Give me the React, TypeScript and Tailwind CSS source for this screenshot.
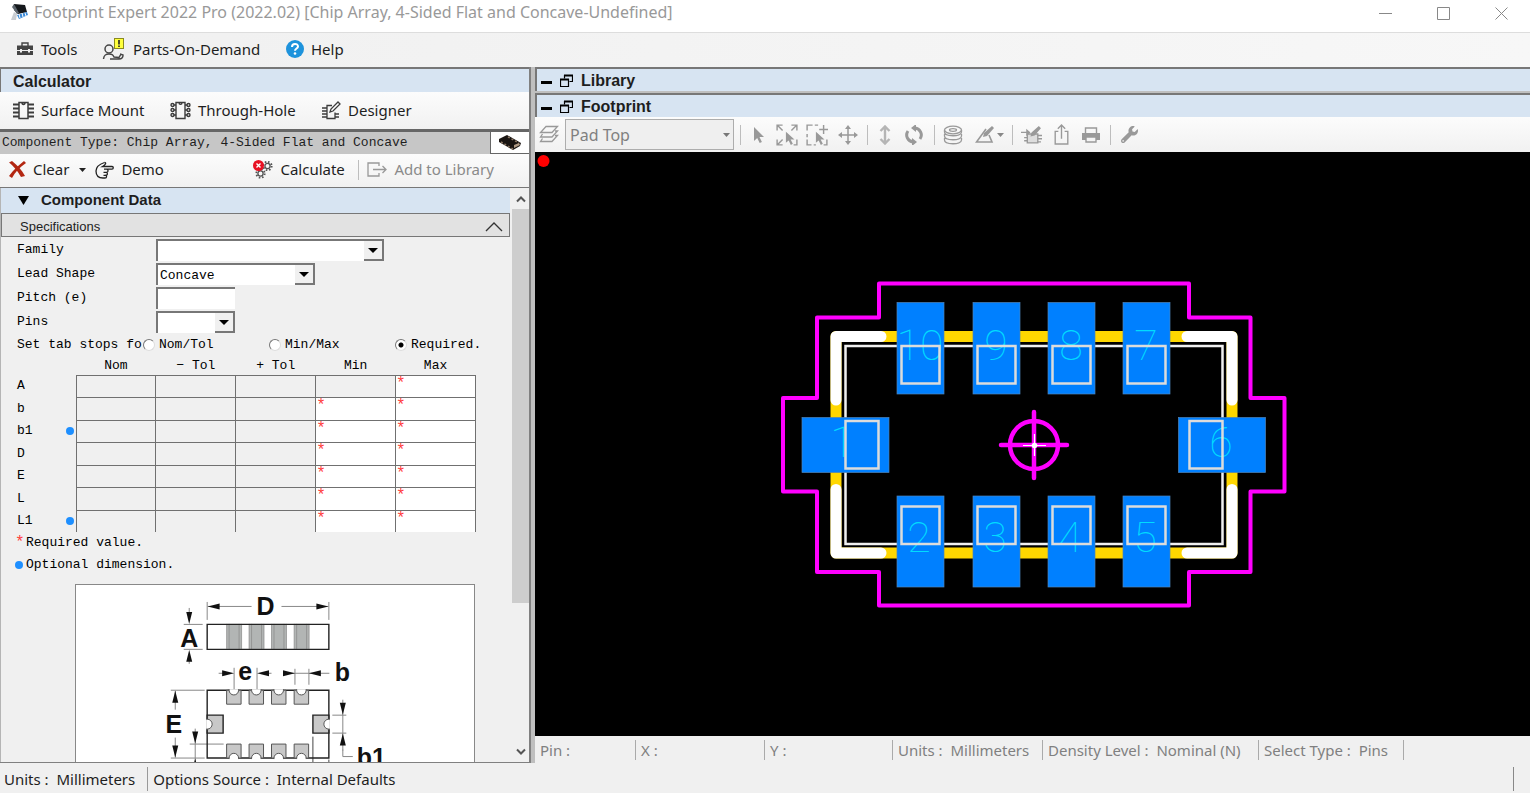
import { Fragment, useState } from 'react';
import type { ReactNode } from 'react';
import { FaWrench } from 'react-icons/fa';
import { clsx } from 'clsx';

const MONO = "font-['Liberation_Mono',monospace] text-[13px]";

/* ---------- small building blocks ---------- */

function Icon({ size = 20, className, children }: { size?: number; className?: string; children: ReactNode }) {
  return (
    <svg
      width={size}
      height={size}
      viewBox="0 0 20 20"
      fill="none"
      stroke="currentColor"
      strokeWidth="1.3"
      className={clsx('shrink-0', className)}
      aria-hidden="true"
    >
      {children}
    </svg>
  );
}

function ToolButton({ icon, label, className }: { icon: ReactNode; label: string; className?: string }) {
  return (
    <button type="button" className={clsx('flex items-center gap-[7px] whitespace-nowrap', className)}>
      {icon}
      {label}
    </button>
  );
}

function IconButton({ label, className, children }: { label: string; className?: string; children: ReactNode }) {
  return (
    <button type="button" aria-label={label} className={clsx('flex h-6 shrink-0 items-center justify-center', className)}>
      {children}
    </button>
  );
}

function Separator() {
  return <div className="h-5 w-px shrink-0 bg-[#bdbdbd]" />;
}

function ComboBox({ id, options, className }: { id: string; options: string[]; className?: string }) {
  return (
    <div className={clsx('relative h-[22px] border-t-2 border-l-2 border-[#777] bg-white', className)}>
      <select id={id} className="block h-full w-full appearance-none bg-transparent pl-[2px] outline-none">
        {options.map((option) => (
          <option key={option}>{option}</option>
        ))}
      </select>
      <span className="pointer-events-none absolute top-0 right-0 flex h-5 w-5 items-center justify-center border-r-2 border-b-2 border-[#777] bg-[#f0f0f0]">
        <svg width="10" height="5" viewBox="0 0 10 5">
          <path d="M0 0h10L5 5z" fill="#000" />
        </svg>
      </span>
    </div>
  );
}

/* ---------- icons ---------- */

function AppIcon() {
  return (
    <svg width="20" height="20" viewBox="0 0 20 20" aria-hidden="true">
      <path d="M1 18 4 10l3 2-1 6z" fill="#c9cdd2" />
      <path d="M4 2 15 3l2 7-9 2-4-4z" fill="#15181c" />
      <path d="M4 2 2 5l5 7 2-1z" fill="#5d656d" />
      <path d="m7 13 10-3 1 3-9 4z" fill="#3b8ad8" />
      <path d="m9 12 1 4M12 11l1 4M15 11l1 3" stroke="#fff" strokeWidth="1" />
    </svg>
  );
}

function ToolboxIcon() {
  return (
    <svg width="18" height="16" viewBox="0 0 18 16" aria-hidden="true" className="shrink-0">
      <path d="M6 5V2h6v3" fill="none" stroke="#444" strokeWidth="1.4" />
      <path d="M1 4.500h16V9H1z" fill="#444" />
      <path d="M1 10h3v1.500h2V10h6v1.500h2V10h3v4H1z" fill="#444" />
      <path d="M4 8h2v2.500H4zM12 8h2v2.500h-2z" fill="#eee" />
    </svg>
  );
}

function PartsIcon() {
  return (
    <svg width="24" height="24" viewBox="0 0 24 24" fill="none" stroke="#444" strokeWidth="1.500" aria-hidden="true" className="shrink-0">
      <circle cx="7" cy="12" r="4" />
      <path d="M1.500 22c.5-4 2-5 5.500-5s4 1 5 3l5 .5 2-3.500M8 22h9c3 0 4-2 4-4l-3-1" />
      <rect x="12.500" y="1.500" width="9" height="10" fill="#ffff3c" stroke="#8a8a20" strokeWidth="1" />
      <path d="M17 3v4.500M17 8.500V10" stroke="#222" strokeWidth="1.600" />
    </svg>
  );
}

function HelpIcon() {
  return (
    <svg width="18" height="18" viewBox="0 0 18 18" aria-hidden="true" className="shrink-0">
      <circle cx="9" cy="9" r="9" fill="#1e93dc" />
      <path d="M6 7c0-4 6-4 6-.5 0 2-3 2-3 4.200" fill="none" stroke="#fff" strokeWidth="2" />
      <circle cx="9" cy="13.500" r="1.300" fill="#fff" />
    </svg>
  );
}

function SurfaceMountIcon() {
  return (
    <svg width="21" height="19" viewBox="0 0 21 19" fill="none" stroke="#3c3c3c" strokeWidth="1.500" aria-hidden="true" className="shrink-0">
      <path d="M6 1.500h9v16H6zM9 1.500c0 2.500 3 2.500 3 0" />
      <path d="M0 3.500h6M0 7.500h6M0 11.500h6M0 15.500h6M15 3.500h6M15 7.500h6M15 11.500h6M15 15.500h6" strokeWidth="1.800" />
    </svg>
  );
}

function ThroughHoleIcon() {
  return (
    <svg width="21" height="19" viewBox="0 0 21 19" fill="none" stroke="#3c3c3c" strokeWidth="1.400" aria-hidden="true" className="shrink-0">
      <path d="M6 1.500h9v16H6zM9 1.500c0 2.500 3 2.500 3 0" />
      {[4, 9, 14].map((y) => (
        <Fragment key={y}>
          <circle cx="2.500" cy={y} r="1.500" />
          <circle cx="18.500" cy={y} r="1.500" />
          <path d={`M4 ${y}h2M15 ${y}h2`} />
        </Fragment>
      ))}
    </svg>
  );
}

function DesignerIcon() {
  return (
    <svg width="19" height="19" viewBox="0 0 19 19" fill="none" stroke="#3c3c3c" strokeWidth="1.300" aria-hidden="true" className="shrink-0">
      <path d="M10 4.500H5v13h8v-6M0 7h5M0 10h5M0 13h5M0 16h5M13 13h4M13 16h4" />
      <path d="m8 11 1-3 7-7 2 2-7 7z" fill="#fff" />
    </svg>
  );
}

function ClearIcon() {
  return (
    <svg width="18" height="17" viewBox="0 0 18 17" aria-hidden="true" className="shrink-0">
      <path d="M1 1.500c4 3 9 9 12 14.500l4-1C14 9 9 4 4 0z" fill="#b32712" />
      <path d="M16 0C11 4 5 9 1 15l3 2C7 11 12 6 18 2z" fill="#b32712" />
    </svg>
  );
}

function HandIcon() {
  return (
    <svg width="19" height="18" viewBox="0 0 19 18" fill="none" stroke="#222" strokeWidth="1.300" aria-hidden="true" className="shrink-0">
      <path d="M9.500 1.500C5 3 1 6 1 10c0 5 3 7 7 7h2c2 0 2-2.500.5-2.800" />
      <path d="M9.500 1.500c2 0 1.500 2-2 4H17c1.700 0 1.700 2.700 0 2.700H9M12 8.500c1.500.5 1.500 2.700-.5 2.800H8.500M11.500 11.500c1.300.5 1.300 2.700-.7 2.800H8.500" />
    </svg>
  );
}

function GearsIcon() {
  return (
    <svg width="20" height="19" viewBox="0 0 20 19" fill="none" stroke="#555" aria-hidden="true" className="shrink-0">
      <circle cx="14.500" cy="6" r="2.600" strokeWidth="1.300" />
      <circle cx="14.500" cy="6" r="4.200" strokeWidth="1.800" strokeDasharray="1.600 1.700" />
      <circle cx="7.500" cy="13.500" r="2.600" strokeWidth="1.300" />
      <circle cx="7.500" cy="13.500" r="4.200" strokeWidth="1.800" strokeDasharray="1.600 1.700" />
      <circle cx="5.500" cy="5.500" r="5.500" fill="#e81123" stroke="none" />
      <path d="m3.500 3.500 4 4m0-4-4 4" stroke="#fff" strokeWidth="1.400" />
    </svg>
  );
}

function AddLibraryIcon() {
  return (
    <svg width="20" height="15" viewBox="0 0 20 15" fill="none" stroke="#999" strokeWidth="1.300" aria-hidden="true" className="shrink-0">
      <path d="M12 4V1H1v13h11v-3M6 7.500h13M15.500 4 19 7.500 15.500 11" />
    </svg>
  );
}

function ChipIcon() {
  return (
    <svg width="24" height="17" viewBox="0 0 24 17" aria-hidden="true">
      <path d="m1 5 8-4 14 8-1 3-7 4L1 8z" fill="#1a1512" />
      <path d="m3 8 12 7M10 3l11 6" stroke="#8a7663" strokeWidth="1.500" strokeDasharray="2 2" />
      <path d="m16 11 5-2 1 2-6 3z" fill="#b09a84" />
    </svg>
  );
}

function RestoreIcon() {
  return (
    <svg width="13" height="13" viewBox="0 0 13 13" fill="none" stroke="#000" strokeWidth="1.200" aria-hidden="true">
      <path d="M4.500 4.500V1.500h8v6h-3" />
      <path d="M4 1.500h9M0 5.500h9" strokeWidth="2" />
      <path d="M.5 5.500h8v7h-8z" />
    </svg>
  );
}

function PrinterIcon() {
  return (
    <svg width="18" height="16" viewBox="0 0 18 16" aria-hidden="true">
      <path d="M3.500 6V1h11v5" fill="none" stroke="currentColor" strokeWidth="1.400" />
      <path d="M0 6h18v7H0z" fill="currentColor" />
      <path d="M4 10h10v5H4z" fill="#f4f4f4" stroke="currentColor" strokeWidth="1.400" />
    </svg>
  );
}

/* ---------- dimension diagram ---------- */

function Arrow({ x, y, dir }: { x: number; y: number; dir: 'l' | 'r' | 'u' | 'd' }) {
  const turn = { l: 0, u: 90, r: 180, d: 270 }[dir];
  return <path d="M0 0 12-3V3z" fill="#111" stroke="none" transform={`translate(${x} ${y}) rotate(${turn})`} />;
}

function DimensionDiagram() {
  const columns = [227, 249.5, 272, 294.7];
  return (
    <svg viewBox="76 585 399 220" className="block w-full" fill="none" aria-hidden="true">
      <g stroke="#888" strokeWidth="1">
        <path d="M207.500 602v18M329.500 602v18M208 606.500h44M282 606.500h47" />
        <path d="M184 624.500h19M184 649.500h19M189.500 608v6M189.500 659v5" />
        <path d="M234.500 668v22M257.500 668v22M219 673.500h8M264 673.500h8" />
        <path d="M284 673.500h46M295.500 669v16M309.500 669v16" />
        <path d="M171 690.500h34M171 758.500h34M175.500 691v19M175.500 738v20" />
        <path d="M190 744.500h34M195.500 729v36" />
        <path d="M333 715.500h14M333 733.500h14M343.500 700v51M343.500 750v7h10" />
        <path d="M313.500 737v40M329.500 760v20" stroke="#444" />
      </g>
      <Arrow x={208} y={606.500} dir="l" />
      <Arrow x={329} y={606.500} dir="r" />
      <Arrow x={189.500} y={624} dir="d" />
      <Arrow x={189.500} y={650} dir="u" />
      <Arrow x={234.500} y={673.500} dir="r" />
      <Arrow x={257.500} y={673.500} dir="l" />
      <Arrow x={295.500} y={673.500} dir="r" />
      <Arrow x={309.500} y={673.500} dir="l" />
      <Arrow x={175.500} y={691} dir="u" />
      <Arrow x={175.500} y={758} dir="d" />
      <Arrow x={195.500} y={744} dir="d" />
      <Arrow x={195.500} y={759} dir="u" />
      <Arrow x={343.500} y={715} dir="d" />
      <Arrow x={343.500} y={734} dir="u" />

      <path d="M207.500 690.500h122v68h-122z" stroke="#222" strokeWidth="1.400" />
      {columns.map((x) => (
        <g key={x}>
          <path d={`M${x} 624h15v25h-15z`} fill="#b2b5b4" />
          <path d={`M${x} 624v25M${x + 2.5} 624v25M${x + 12.5} 624v25M${x + 15} 624v25`} stroke="#888" strokeWidth=".7" />
          <path d={`M${x} 690.500h14.500v14h-14.500z`} fill="#c8c8c8" stroke="#555" />
          <path d={`M${x + 2.5} 689.500v1a4.750 4.750 0 0 0 9.500 0v-1`} fill="#fff" stroke="#555" />
          <path d={`M${x} 744.500h14.500v14h-14.500z`} fill="#c8c8c8" stroke="#555" />
          <path d={`M${x + 2.5} 759.500v-1a4.750 4.750 0 0 1 9.500 0v1`} fill="#fff" stroke="#555" />
        </g>
      ))}
      <path d="M207.500 624.500h122v25h-122z" stroke="#222" strokeWidth="1.400" />
      <path d="M207.500 715.500h16v18h-16z" fill="#c8c8c8" stroke="#222" strokeWidth="1.400" />
      <path d="M206.500 719.500h1a5 5 0 0 1 0 10h-1" fill="#fff" stroke="#555" />
      <path d="M329.500 715.500h-16v18h16z" fill="#c8c8c8" stroke="#222" strokeWidth="1.400" />
      <path d="M330.500 719.500h-1a5 5 0 0 0 0 10h1" fill="#fff" stroke="#555" />

      <g fill="#111" fontFamily="'Liberation Sans', sans-serif" fontWeight="700" fontSize="25" textAnchor="middle">
        <text x="266" y="615">D</text>
        <text x="189.500" y="647">A</text>
        <text x="245.500" y="680">e</text>
        <text x="343" y="681">b</text>
        <text x="174" y="733">E</text>
        <text x="372" y="766">b1</text>
      </g>
    </svg>
  );
}

/* ---------- footprint drawing ---------- */

const PAD_X = [897, 973, 1048, 1123];
const TOP_PINS = ['10', '9', '8', '7'];
const BOTTOM_PINS = ['2', '3', '4', '5'];

function FootprintCanvas() {
  return (
    <svg viewBox="535 152 995 584" className="block h-full w-full" fill="none" role="img" aria-label="Footprint">
      <circle cx="543.500" cy="161" r="6" fill="#f00" />

      {/* courtyard */}
      <path
        d="M879 283.500H1189V317.500H1250.500V398H1284.500V491.500H1250.500V572H1189V605.500H879V572H817V491.500H783V398H817V317.500H879Z"
        stroke="#f0f"
        strokeWidth="4"
        strokeLinejoin="round"
      />

      {/* assembly outline and silkscreen corners */}
      <rect x="836" y="336.500" width="396" height="216.500" stroke="#ffd700" strokeWidth="11" strokeLinejoin="round" />
      <path
        d="M836 400V336.500H881M1187 336.500H1232V400M1232 489.500V553H1187M881 553H836V489.500"
        stroke="#fff"
        strokeWidth="11"
        strokeLinecap="round"
        strokeLinejoin="round"
      />
      <rect x="845.500" y="346" width="377" height="198" stroke="#f0f0f0" strokeWidth="2.500" />

      {/* pads */}
      <g fill="#0080ff" stroke="#4f83b8" strokeWidth=".7">
        {PAD_X.map((x) => (
          <Fragment key={x}>
            <rect x={x} y="302.500" width="47" height="91.500" />
            <rect x={x} y="496" width="47" height="91" />
          </Fragment>
        ))}
        <rect x="802" y="417.500" width="87" height="55" />
        <rect x="1178.500" y="417.500" width="87" height="55" />
      </g>

      <g fill="#00dcff" fontFamily="Roboto, sans-serif" fontWeight="100" fontSize="43" textAnchor="middle">
        {PAD_X.map((x, i) => (
          <Fragment key={x}>
            <text x={x + 23} y="360">{TOP_PINS[i]}</text>
            <text x={x + 22} y="552">{BOTTOM_PINS[i]}</text>
          </Fragment>
        ))}
        <text x="842" y="457">1</text>
        <text x="1221" y="457">6</text>
      </g>

      {/* terminals */}
      <g stroke="#dcdcdc" strokeWidth="2.500">
        {PAD_X.map((x) => (
          <Fragment key={x}>
            <rect x={x + 4.5} y="346" width="38" height="37.500" />
            <rect x={x + 4.5} y="506.500" width="38" height="37.500" />
          </Fragment>
        ))}
        <rect x="845.500" y="421" width="33" height="47.500" />
        <rect x="1189.500" y="421" width="33" height="47.500" />
      </g>

      {/* origin */}
      <g stroke="#f0f" strokeWidth="4.500" strokeLinecap="round">
        <circle cx="1034" cy="445" r="24" />
        <path d="M1001 445h66M1034 412v66" />
      </g>
      <path d="M1023 445.500h23M1034.500 434v22" stroke="#fff" strokeWidth="1.200" />
      <circle cx="1034.500" cy="445.500" r="2.800" fill="#fff" />
    </svg>
  );
}

/* ---------- calculator ---------- */

const COLUMNS = ['Nom', '− Tol', '+ Tol', 'Min', 'Max'];

const ROWS = [
  { name: 'A', required: ['Max'] },
  { name: 'b', required: ['Min', 'Max'] },
  { name: 'b1', required: ['Min', 'Max'], optional: true },
  { name: 'D', required: ['Min', 'Max'] },
  { name: 'E', required: ['Min', 'Max'] },
  { name: 'L', required: ['Min', 'Max'] },
  { name: 'L1', required: ['Min', 'Max'], optional: true },
];

function Dot() {
  return <span className="block h-2 w-2 rounded-full bg-[#1e8fff]" />;
}

function DimensionTable() {
  return (
    <table className="h-[175px] w-[475px] table-fixed border-collapse">
      <thead>
        <tr className="h-[18px]">
          <th className="w-[75px]" />
          {COLUMNS.map((column) => (
            <th key={column} className="p-0 text-center leading-4 font-normal">{column}</th>
          ))}
        </tr>
      </thead>
      <tbody>
        {ROWS.map((row) => (
          <tr key={row.name}>
            <th className="p-0 pl-4 text-left font-normal">
              <span className="flex items-center justify-between pr-[2px] leading-4">
                {row.name}
                {row.optional && <Dot />}
              </span>
            </th>
            {COLUMNS.map((column) => {
              const required = row.required.includes(column);
              return (
                <td
                  key={column}
                  className={clsx('relative border-x border-t border-[#707070] p-0', required && 'bg-white')}
                >
                  {required && <span className="absolute top-0 left-0 text-base leading-4 text-[#ff3b3b]">*</span>}
                  <input
                    aria-label={`${row.name} ${column}`}
                    className="block h-5 w-full bg-transparent px-2 outline-none"
                  />
                </td>
              );
            })}
          </tr>
        ))}
      </tbody>
    </table>
  );
}

function SpecificationsForm() {
  const [tabStops, setTabStops] = useState('Required.');

  return (
    <div className={clsx(MONO, 'text-black')}>
      <div className="grid grid-cols-[139px_1fr] items-center gap-y-[2px] pt-[2px] pl-4 leading-[22px]">
        <label htmlFor="family">Family</label>
        <ComboBox id="family" options={['']} className="w-[228px]" />
        <label htmlFor="lead-shape">Lead Shape</label>
        <ComboBox id="lead-shape" options={['Concave', 'Flat']} className="w-[159px]" />
        <label htmlFor="pitch">Pitch (e)</label>
        <input id="pitch" className="h-[22px] w-[79px] border-t-2 border-l-2 border-[#777] bg-white px-1 outline-none" />
        <label htmlFor="pins">Pins</label>
        <ComboBox id="pins" options={['']} className="w-[79px]" />
      </div>

      <div className="flex h-6 items-center pl-4">
        <span className="w-[126px] whitespace-nowrap">Set tab stops fo</span>
        {['Nom/Tol', 'Min/Max', 'Required.'].map((option) => (
          <label key={option} className="flex w-[126px] items-center gap-1 last:w-auto">
            <input
              type="radio"
              name="tab-stops"
              checked={tabStops === option}
              onChange={() => setTabStops(option)}
              className="h-3 w-3 appearance-none rounded-full border border-t-[#777] border-r-[#ddd] border-b-[#ddd] border-l-[#777] bg-white checked:bg-[radial-gradient(circle,#000_2px,#fff_3px)]"
            />
            {option}
          </label>
        ))}
      </div>

      <DimensionTable />

      <div className="flex h-[22px] items-center gap-[3px] pl-[14px]">
        <span className="w-2 text-base text-[#ff3b3b]">*</span>
        Required value.
      </div>
      <div className="flex h-[22px] items-center gap-[3px] pl-[14px]">
        <Dot />
        Optional dimension.
      </div>

      <div className="mt-2 mb-4 ml-[74px] w-[400px] border border-[#888] bg-white">
        <DimensionDiagram />
      </div>
    </div>
  );
}

function ScrollBar() {
  return (
    <div className="flex w-[19px] shrink-0 flex-col bg-[#f0f0f0] pl-[2px]">
      <button type="button" aria-label="Scroll up" className="flex h-[21px] items-center justify-center">
        <svg width="10" height="8" viewBox="0 0 10 8" fill="none" stroke="#555" strokeWidth="2">
          <path d="m1 6.500 4-4 4 4" />
        </svg>
      </button>
      <div className="flex-1">
        <div className="h-[74%] bg-[#cdcdcd]" />
      </div>
      <button type="button" aria-label="Scroll down" className="flex h-[21px] items-center justify-center">
        <svg width="10" height="8" viewBox="0 0 10 8" fill="none" stroke="#555" strokeWidth="2">
          <path d="m1 1.500 4 4 4-4" />
        </svg>
      </button>
    </div>
  );
}

function CalculatorPanel() {
  return (
    <section className="flex w-[531px] shrink-0 flex-col border-r-2 border-b border-[#808080] bg-[#f0f0f0]">
      <h2 className="h-[25px] border-t-2 border-l border-[#777] bg-[#d7e4f2] pt-px pl-3 font-['Liberation_Sans',sans-serif] text-base leading-[23px] font-bold">
        Calculator
      </h2>

      <div className="flex h-[37px] items-center bg-linear-to-b from-[#fcfcfc] to-[#f1f1f1] pl-[13px]">
        <ToolButton icon={<SurfaceMountIcon />} label="Surface Mount" className="w-[157px]" />
        <ToolButton icon={<ThroughHoleIcon />} label="Through-Hole" className="w-[152px]" />
        <ToolButton icon={<DesignerIcon />} label="Designer" />
      </div>

      <div className={clsx(MONO, 'flex h-[25px] border-t-3 border-[#666] bg-[#c6c6c6]')}>
        <div className="flex-1 pl-[2px] leading-[22px] whitespace-nowrap">
          Component Type: Chip Array, 4-Sided Flat and Concave
        </div>
        <button
          type="button"
          aria-label="Component preview"
          className="flex w-[39px] items-center justify-center border-b border-l border-[#666] bg-white"
        >
          <ChipIcon />
        </button>
      </div>

      <div className="flex h-[33px] items-center bg-linear-to-b from-[#fcfcfc] to-[#f1f1f1] pb-[2px] pl-2">
        <ToolButton icon={<ClearIcon />} label="Clear" />
        <IconButton label="Clear options" className="w-[26px]">
          <svg width="7" height="4" viewBox="0 0 7 4">
            <path d="M0 0h7L3.500 4z" fill="#222" />
          </svg>
        </IconButton>
        <ToolButton icon={<HandIcon />} label="Demo" className="w-[158px]" />
        <ToolButton icon={<GearsIcon />} label="Calculate" className="w-[105px]" />
        <Separator />
        <ToolButton icon={<AddLibraryIcon />} label="Add to Library" className="ml-2 text-[#8a8a8a]" />
      </div>

      <div className="flex min-h-0 flex-1 border-t border-[#777]">
        <div className="min-w-0 flex-1 overflow-hidden border-l border-[#b5b5b5]">
          <h3 className="flex h-[25px] items-center gap-3 bg-[#d7e4f2] pl-[17px] font-['Liberation_Sans',sans-serif] text-[15px] font-bold">
            <svg width="11" height="9" viewBox="0 0 11 9">
              <path d="M0 0h11L5.500 9z" fill="#000" />
            </svg>
            Component Data
          </h3>
          <button
            type="button"
            className="flex h-6 w-full items-center justify-between border border-[#777] bg-[#e2e2e2] pt-[3px] pr-[6px] pl-[18px] font-['Liberation_Sans',sans-serif] text-[13px]"
          >
            Specifications
            <svg width="18" height="10" viewBox="0 0 18 10" fill="none" stroke="#333" strokeWidth="1.300">
              <path d="m1 9 8-8 8 8" />
            </svg>
          </button>
          <SpecificationsForm />
        </div>
        <ScrollBar />
      </div>
    </section>
  );
}

/* ---------- right side ---------- */

function PaneHeader({ title }: { title: string }) {
  return (
    <h2 className="flex items-center border-t-2 border-l-2 border-[#777] bg-[#d7e4f2] pt-px pl-1 font-['Liberation_Sans',sans-serif] text-base leading-[21px] font-bold">
      <span className="mt-1 h-[3px] w-[11px] bg-black" />
      <span className="mr-2 ml-2">
        <RestoreIcon />
      </span>
      {title}
    </h2>
  );
}

function FootprintToolbar() {
  return (
    <div className="flex h-[35px] shrink-0 items-center bg-linear-to-b from-[#fcfcfc] to-[#f1f1f1] pl-[3px] text-[#999]">
      <IconButton label="Layers" className="w-[21px]">
        <Icon>
          <path d="M7 1.500h11.500L13 7.500H1.500zM3.500 9l-2 3H13l5.500-6H16M3.500 13.500l-2 3H13l5.500-6H16" />
        </Icon>
      </IconButton>
      <div className="relative ml-[6px]">
        <select
          aria-label="Layer"
          className="block h-[31px] w-[169px] appearance-none border border-[#adadad] bg-[#efefef] pl-1 text-base text-[#808080] outline-none"
        >
          <option>Pad Top</option>
          <option>Pad Bottom</option>
        </select>
        <svg width="7" height="4" viewBox="0 0 7 4" className="pointer-events-none absolute top-[14px] right-1">
          <path d="M0 0h7L3.500 4z" fill="#777" />
        </svg>
      </div>
      <div className="ml-[6px] flex items-center">
        <Separator />
        <IconButton label="Select" className="w-[34px]">
          <Icon>
            <path d="M6 2v14l3.200-3 2.500 5 2.200-1-2.400-5H16z" fill="currentColor" stroke="none" />
          </Icon>
        </IconButton>
        <IconButton label="Zoom to fit" className="w-6">
          <Icon size={22}>
            <path d="M1 6V1h5M1 1l5 5M14 1h5v5M19 1l-5 5M1 14v5h5M1 19l5-5M19 14v5h-3" />
            <path d="M9 7v10l2.500-2 2 4 1.800-1-2-4h3.500z" fill="currentColor" stroke="none" />
          </Icon>
        </IconButton>
        <IconButton label="Zoom to area" className="ml-[6px] w-6">
          <Icon size={22}>
            <path d="M1 6V1h5M1 9v3M8 1h3M1 14v5h4M7 19h2M19 14v5h-3M16 1v8M12 5h8" />
            <path d="M9 7v10l2.500-2 2 4 1.800-1-2-4h3.500z" fill="currentColor" stroke="none" />
          </Icon>
        </IconButton>
        <IconButton label="Pan" className="ml-[7px] w-6">
          <Icon>
            <path d="M10 2v16M2 10h16" strokeWidth="1.500" />
            <path d="m10 0 3 4H7zM10 20l3-4H7zM0 10l4-3v6zM20 10l-4-3v6z" fill="currentColor" stroke="none" />
          </Icon>
        </IconButton>
        <div className="ml-[7px]">
          <Separator />
        </div>
        <IconButton label="Flip" className="w-[34px] text-[#b5b5b5]">
          <Icon>
            <path d="M10 3v14M5.500 6 10 1.500 14.500 6M5.500 14l4.500 4.500 4.500-4.500" strokeWidth="2.400" />
          </Icon>
        </IconButton>
        <IconButton label="Rotate" className="w-6">
          <Icon>
            <path d="M9 17a7 7 0 0 1-5-11M11 3a7 7 0 0 1 5 11" strokeWidth="3" />
            <path d="M12-1v8L7 3zM8 13v8l5-4z" fill="currentColor" stroke="none" />
          </Icon>
        </IconButton>
        <div className="ml-2">
          <Separator />
        </div>
        <IconButton label="Stack" className="w-9">
          <Icon>
            <ellipse cx="10" cy="5" rx="8.500" ry="3.800" />
            <ellipse cx="10" cy="5" rx="3.500" ry="1.300" />
            <path d="M1.500 5v2c0 5 17 5 17 0V5M1.500 9v2c0 5 17 5 17 0V9M1.500 13v2c0 5 17 5 17 0v-2" />
          </Icon>
        </IconButton>
        <IconButton label="Draft" className="ml-1 w-5">
          <Icon>
            <path d="M11 4 1.500 17H17l-3-7" strokeWidth="1.600" />
            <path d="m8 12 1-4 8-7 2 2-7 8z" fill="currentColor" stroke="none" />
          </Icon>
        </IconButton>
        <IconButton label="Draft options" className="w-[10px]">
          <svg width="7" height="4" viewBox="0 0 7 4">
            <path d="M0 0h7L3.500 4z" fill="#888" />
          </svg>
        </IconButton>
        <div className="ml-[7px]">
          <Separator />
        </div>
        <IconButton label="Edit footprint" className="w-9">
          <Icon size={21}>
            <path d="M6 9.500h10v8.500H6z" fill="#ddd" />
            <path d="M0 8h8M3 13h3M3 16h3M16 11h4M16 14h4M16 17h3" />
            <path d="M5 4.500 9 8l-4 3.500zM9 12l1-4 7-6 2 2-6 7z" fill="currentColor" stroke="none" />
          </Icon>
        </IconButton>
        <IconButton label="Export" className="w-6">
          <Icon size={21}>
            <path d="M7 7H4v12h12V7h-3M10 14V1M6.500 4.500 10 1l3.500 3.500" />
          </Icon>
        </IconButton>
        <IconButton label="Print" className="ml-[6px] w-6">
          <PrinterIcon />
        </IconButton>
        <div className="ml-[7px]">
          <Separator />
        </div>
        <IconButton label="Settings" className="w-9">
          <FaWrench size={17} />
        </IconButton>
      </div>
    </div>
  );
}

function StatusCell({ className, children }: { className?: string; children: ReactNode }) {
  return (
    <div className={clsx('h-5 border-r border-[#aaa] pl-[5px] leading-5 whitespace-pre', className)}>{children}</div>
  );
}

function FootprintPanel() {
  return (
    <section className="flex min-w-0 flex-1 flex-col">
      <PaneHeader title="Library" />
      <div className="h-[2px] bg-[#bfbfbf]" />
      <PaneHeader title="Footprint" />
      <FootprintToolbar />
      <div className="min-h-0 flex-1 bg-black">
        <FootprintCanvas />
      </div>
      <div className="flex h-[27px] shrink-0 items-center bg-[#f0f0f0] text-[#808080]">
        <StatusCell className="w-[101px]">Pin :</StatusCell>
        <StatusCell className="w-[129px]">X :</StatusCell>
        <StatusCell className="w-[128px]">Y :</StatusCell>
        <StatusCell className="w-[150px]">{'Units :  Millimeters'}</StatusCell>
        <StatusCell className="w-[216px]">{'Density Level :  Nominal (N)'}</StatusCell>
        <StatusCell className="w-[145px]">{'Select Type :  Pins'}</StatusCell>
      </div>
    </section>
  );
}

/* ---------- window ---------- */

function TitleBar() {
  return (
    <header className="flex h-8 shrink-0 items-start justify-between bg-white">
      <div className="flex items-center gap-1 pt-px pl-[10px]">
        <AppIcon />
        <h1 className="text-base leading-[22px] whitespace-nowrap text-[#999]">
          Footprint Expert 2022 Pro (2022.02) [Chip Array, 4-Sided Flat and Concave-Undefined]
        </h1>
      </div>
      <div className="flex text-[#888]">
        <button type="button" aria-label="Minimize" className="flex h-[26px] w-[58px] items-center justify-center">
          <svg width="13" height="13" viewBox="0 0 13 13" fill="none" stroke="currentColor">
            <path d="M0 6.500h13" />
          </svg>
        </button>
        <button type="button" aria-label="Maximize" className="flex h-[26px] w-[58px] items-center justify-center">
          <svg width="13" height="13" viewBox="0 0 13 13" fill="none" stroke="currentColor">
            <path d="M.5.5h12v12H.5z" />
          </svg>
        </button>
        <button type="button" aria-label="Close" className="flex h-[26px] w-[58px] items-center justify-center">
          <svg width="13" height="13" viewBox="0 0 13 13" fill="none" stroke="currentColor">
            <path d="m.5.5 12 12m0-12-12 12" />
          </svg>
        </button>
      </div>
    </header>
  );
}

function App() {
  return (
    <div className="flex h-screen w-full flex-col overflow-hidden bg-[#f0f0f0] font-['Noto_Sans',sans-serif] text-[15px] text-[#1e1e1e]">
      <TitleBar />

      <nav className="flex h-[35px] shrink-0 items-center border-t border-[#ddd] bg-linear-to-r from-[#f0f0f0] to-[#f7f7f7] pb-[2px] pl-4">
        <ToolButton icon={<ToolboxIcon />} label="Tools" className="w-[86px]" />
        <ToolButton icon={<PartsIcon />} label="Parts-On-Demand" className="w-[184px]" />
        <ToolButton icon={<HelpIcon />} label="Help" />
      </nav>

      <main className="flex min-h-0 flex-1">
        <CalculatorPanel />
        <div className="w-1 shrink-0 bg-[#bfbfbf]" />
        <FootprintPanel />
      </main>

      <footer className="mt-[2px] flex h-7 shrink-0 items-center">
        <div className="h-6 pr-3 pl-1 leading-6 whitespace-pre">{'Units :  Millimeters'}</div>
        <div className="h-6 flex-1 border-l border-[#999] pl-[5px] leading-6 whitespace-pre">
          {'Options Source :  Internal Defaults'}
        </div>
        <div className="mr-4 h-6 w-px bg-[#888]" />
      </footer>
    </div>
  );
}

export default App;
